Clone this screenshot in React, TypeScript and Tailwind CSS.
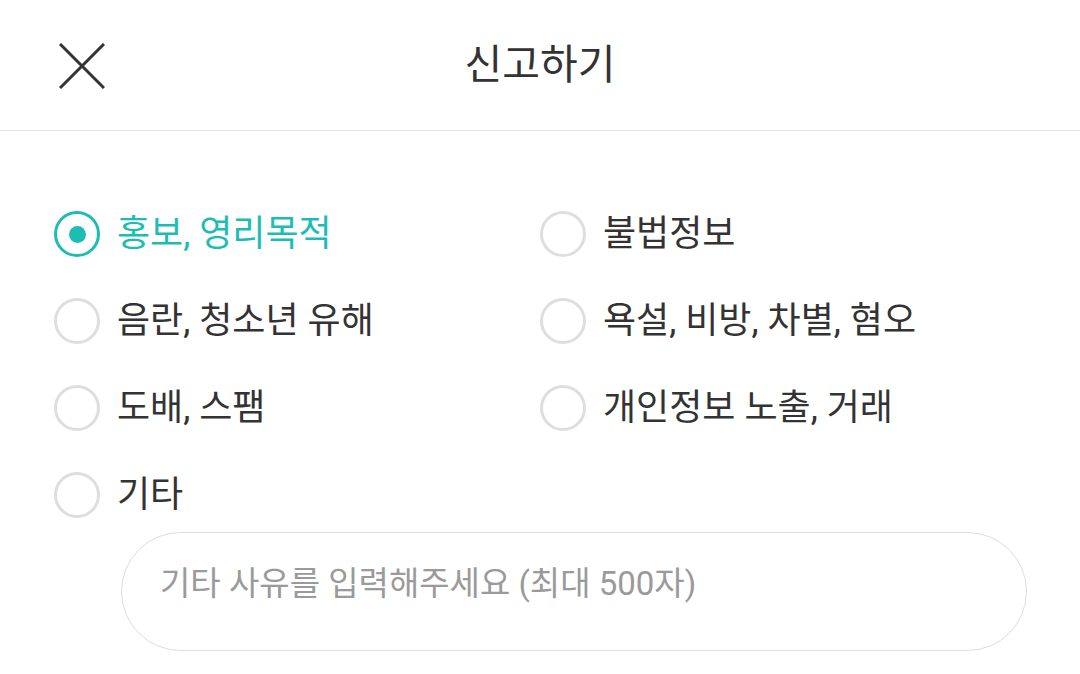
import { useState } from "react";

const REASONS = [
  "홍보, 영리목적",
  "불법정보",
  "음란, 청소년 유해",
  "욕설, 비방, 차별, 혐오",
  "도배, 스팸",
  "개인정보 노출, 거래",
  "기타",
];

function Radio({ checked }: { checked: boolean }) {
  return (
    <span
      className={
        checked
          ? "flex h-[46px] w-[46px] shrink-0 items-center justify-center rounded-full border-[3px] border-[#1ebdb4]"
          : "flex h-[46px] w-[46px] shrink-0 items-center justify-center rounded-full border-[3px] border-[#dedede]"
      }
    >
      {checked && <span className="h-[17px] w-[17px] rounded-full bg-[#1ebdb4]" />}
    </span>
  );
}

export default function App() {
  const [selected, setSelected] = useState(0);

  return (
    <div
      className="h-[674px] w-[1080px] overflow-hidden bg-white text-[#333]"
      style={{ fontFamily: 'Roboto, "Noto Sans CJK KR", sans-serif' }}
    >
      <header className="relative flex h-[131px] items-center justify-center border-b border-[#e2e2e2]">
        <button className="absolute left-[59px] top-[43px] h-[46px] w-[46px]">
          <svg viewBox="0 0 46 46" className="h-[46px] w-[46px]" fill="none" stroke="#333" strokeWidth="3">
            <path d="M1 1 L45 45 M45 1 L1 45" />
          </svg>
        </button>
        <h1 className="text-[41px] font-normal leading-none">신고하기</h1>
      </header>

      <div className="px-[54px] pt-[80px]">
        <div className="grid grid-cols-2 gap-y-[41px]">
          {REASONS.map((r, i) => (
            <button
              key={r}
              onClick={() => setSelected(i)}
              className="flex h-[46px] items-center gap-[17px] text-left"
            >
              <Radio checked={selected === i} />
              <span
                className={
                  selected === i
                    ? "text-[36px] leading-none text-[#1ebdb4]"
                    : "text-[36px] leading-none text-[#333]"
                }
              >
                {r}
              </span>
            </button>
          ))}
        </div>

        <div className="mt-[14px] ml-[67px] mr-[-1px] flex h-[119px] items-center rounded-[60px] border border-[#dddddd] px-[38px] pb-[16px]">
          <input
            className="w-full bg-transparent text-[33px] text-[#333] outline-none placeholder:text-[#9a9a9a]"
            placeholder="기타 사유를 입력해주세요 (최대 500자)"
          />
        </div>
      </div>
    </div>
  );
}
